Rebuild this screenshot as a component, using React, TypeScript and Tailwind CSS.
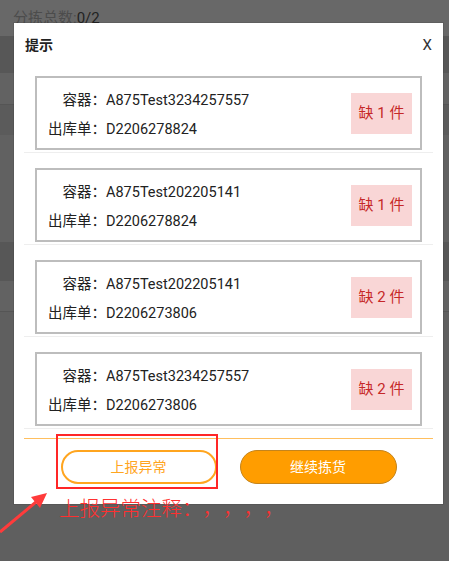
const items = [
  { box: 'A875Test3234257557', order: 'D2206278824', lack: 1 },
  { box: 'A875Test202205141', order: 'D2206278824', lack: 1 },
  { box: 'A875Test202205141', order: 'D2206273806', lack: 2 },
  { box: 'A875Test3234257557', order: 'D2206273806', lack: 2 },
]

function ShortageCard({ box, order, lack }: { box: string; order: string; lack: number }) {
  return (
    <div className="border-b border-[#eeeeee] px-[11px] pt-[15px] pb-[2px]">
      <div className="flex h-[74px] items-center justify-between border-2 border-[#bdbdbd] bg-white pr-[8px] pl-[9px]">
        <div className="flex flex-col gap-[9px] pt-[5px] text-[14.5px] leading-[20px] text-[#222]">
          <div className="flex whitespace-nowrap">
            <span className="w-[60px] text-right">容器：</span>
            <span>{box}</span>
          </div>
          <div className="flex whitespace-nowrap">
            <span className="w-[60px] text-right">出库单：</span>
            <span>{order}</span>
          </div>
        </div>
        <div className="flex h-[41px] w-[61px] items-center justify-center bg-[#f9d6d6] text-[15px] text-[#c62828]">
          缺 {lack} 件
        </div>
      </div>
    </div>
  )
}

export default function App() {
  return (
    <div className="relative h-[561px] w-[449px] overflow-hidden bg-[#5f5f5f] font-[Roboto,'Noto_Sans_CJK_SC',sans-serif]">
      {/* page behind the dim layer */}
      <div className="flex flex-col">
        <div className="flex h-[36px] items-center bg-[#686868] px-[13px] text-[15px]">
          <span className="text-[#4c4c4c]">分拣总数: </span>
          <span className="text-[#222]">0/2</span>
        </div>
        <div className="h-[37px] bg-[#575757]" />
        <div className="h-[32px] border-b border-[#555] bg-[#626262]" />
        <div className="h-[30px] bg-[#5b5b5b]" />
        <div className="h-[107px] bg-[#616161]" />
        <div className="h-[39px] bg-[#575757]" />
        <div className="h-[31px] border-b border-[#555] bg-[#626262]" />
      </div>

      {/* dialog */}
      <div className="absolute top-[23px] left-[14px] flex w-[429px] flex-col bg-white shadow-[0_0_0_1px_rgba(0,0,0,0.08)]">
        <div className="flex h-[38px] items-center justify-between px-[11px] pt-[6px]">
          <span className="text-[14px] font-bold text-[#222]">提示</span>
          <span className="text-[15px] text-[#333]">X</span>
        </div>
        <div className="px-[10px]">
          {items.map((it, i) => (
            <ShortageCard key={i} {...it} />
          ))}
        </div>
        <div className="mx-[10px] mt-[9px] flex justify-center gap-[23px] border-t border-[#ffbf5e] pt-[11px] pb-[20px]">
          <button className="h-[34px] w-[156px] rounded-full border-2 border-[#ffa51f] bg-white text-[14px] text-[#ffa51f]">
            上报异常
          </button>
          <button className="h-[34px] w-[157px] rounded-full border border-[#c4841c] bg-[#ff9d00] text-[14px] text-white">
            继续拣货
          </button>
        </div>
      </div>

      {/* annotation */}
      <div className="absolute top-[434px] left-[56px] h-[55px] w-[162px] border-2 border-[#ff2626]" />
      <div className="absolute top-[494px] left-[59px] font-['Noto_Sans_CJK_SC',sans-serif] text-[20.5px] leading-[26px] font-light whitespace-nowrap text-[#ff3030] [text-spacing-trim:space-all]">
        上报异常注释：，，，，
      </div>
      <svg className="absolute top-[485px] left-0" width="55" height="50" viewBox="0 0 55 50">
        <line x1="0" y1="47" x2="36" y2="17" stroke="#ff3b3b" strokeWidth="3" />
        <polygon points="47,8 40,23 31,12" fill="#ff3b3b" />
      </svg>
    </div>
  )
}
